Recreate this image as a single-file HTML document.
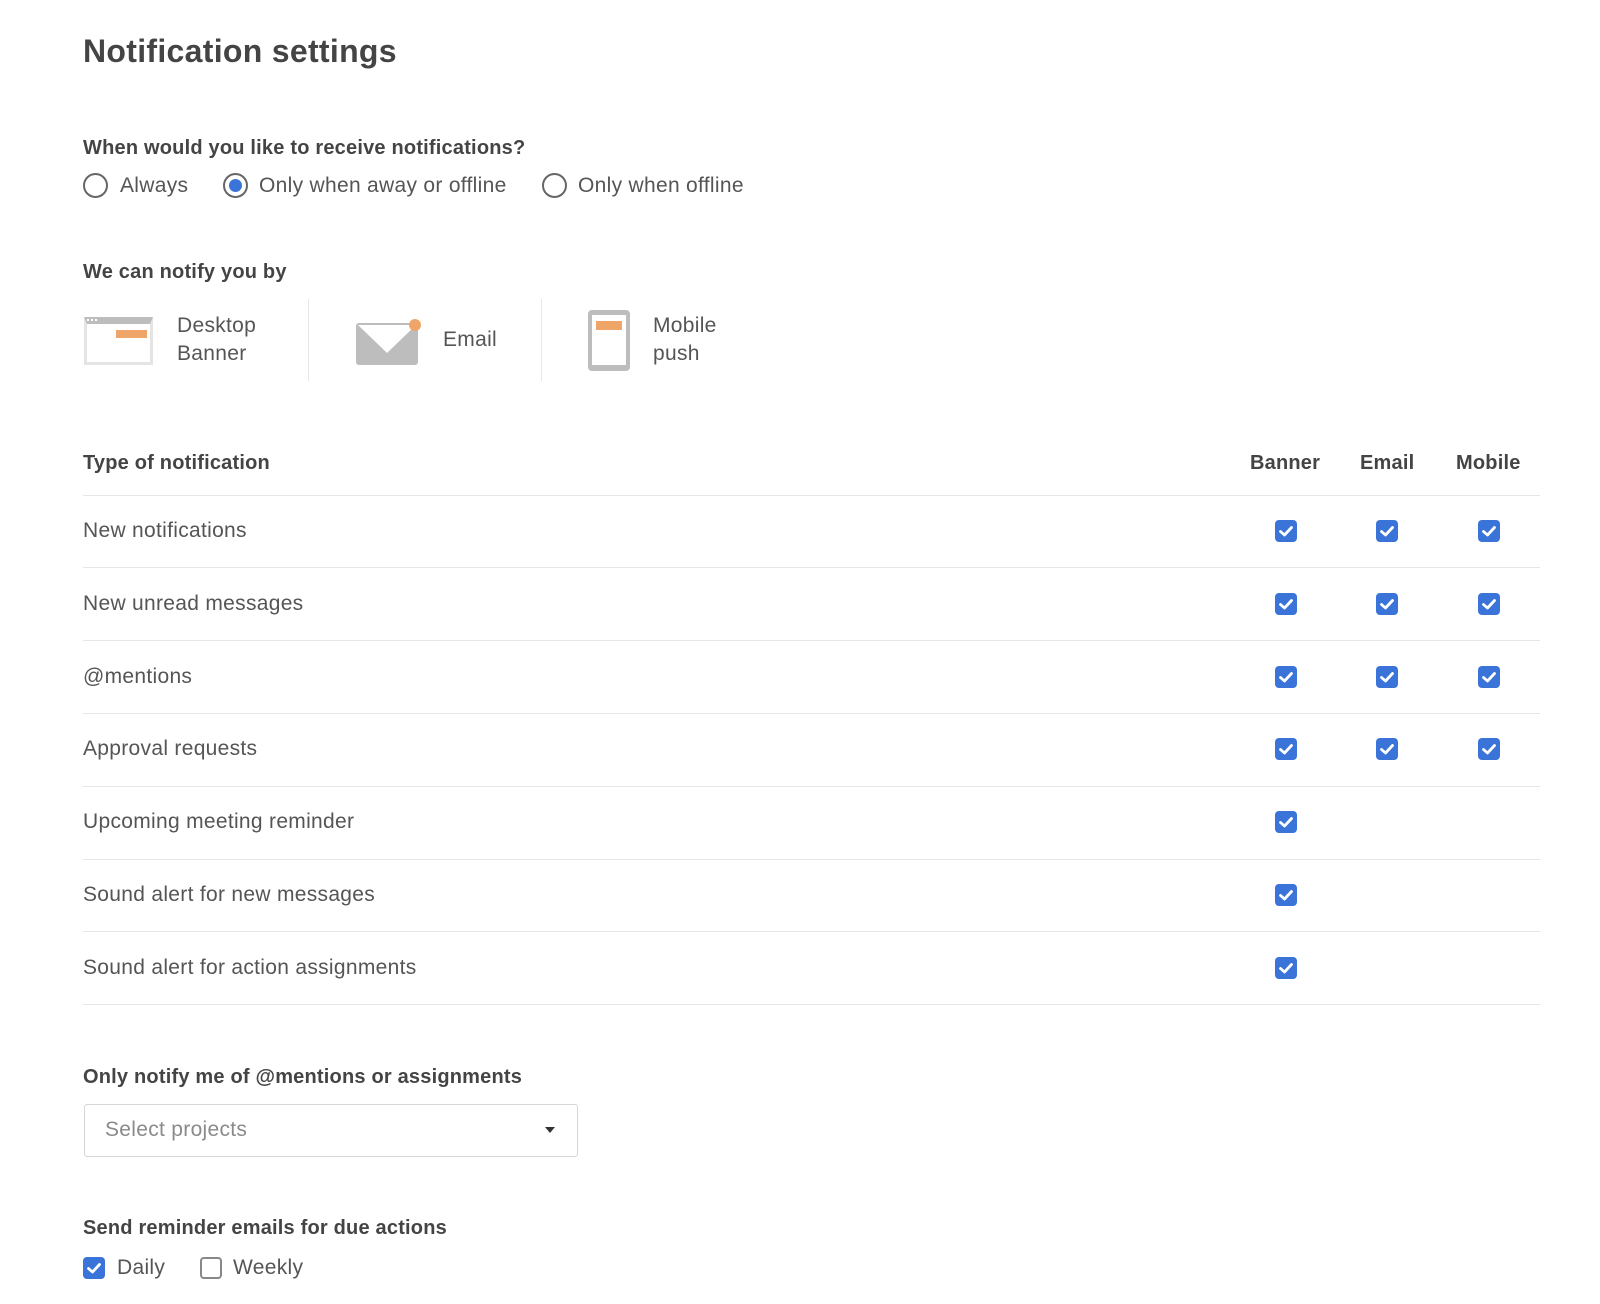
<!DOCTYPE html>
<html><head><meta charset="utf-8"><style>
*{margin:0;padding:0;box-sizing:border-box}
body{width:1600px;height:1304px;background:#fff;font-family:"Liberation Sans",sans-serif;color:#555;position:relative;overflow:hidden}
.a{position:absolute;white-space:nowrap;line-height:30px;font-size:21px;letter-spacing:0.3px}
.h{font-weight:bold;color:#444;font-size:20px;letter-spacing:0.2px}
.radio{position:absolute;width:25px;height:25px;border:2px solid #666;border-radius:50%}
.radio.on::after{content:"";position:absolute;left:4px;top:4px;width:13px;height:13px;border-radius:50%;background:#3a74d8}
.cb{position:absolute;width:22px;height:22px;border-radius:4px;background:#3a74d8}
.cb svg{position:absolute;left:0;top:0}
.cbo{position:absolute;width:22px;height:22px;border-radius:4px;border:2px solid #888;background:#fff}
.line{position:absolute;left:83px;width:1457px;height:1px;background:#e6e6e6}
.vline{position:absolute;width:1px;background:#e6e6e6}
</style></head><body>
<div class="a" style="left:83px;top:31px;font-size:32px;line-height:40px;font-weight:bold;color:#444;letter-spacing:0.3px">Notification settings</div>

<div class="a h" style="left:83px;top:133px">When would you like to receive notifications?</div>
<div class="radio" style="left:83px;top:173px"></div>
<div class="a" style="left:120px;top:171px">Always</div>
<div class="radio on" style="left:223px;top:173px"></div>
<div class="a" style="left:259px;top:171px">Only when away or offline</div>
<div class="radio" style="left:542px;top:173px"></div>
<div class="a" style="left:578px;top:171px">Only when offline</div>

<div class="a h" style="left:83px;top:257px">We can notify you by</div>
<div style="position:absolute;left:84px;top:317px;width:69px;height:48px;border:3px solid #e4e4e4;border-top:7px solid #bdbdbd;background:#fff"></div>
<div style="position:absolute;left:87px;top:319px;width:2px;height:2px;background:#fff;box-shadow:4px 0 #fff,8px 0 #fff"></div>
<div style="position:absolute;left:116px;top:330px;width:31px;height:8px;background:#efa567"></div>
<div class="a" style="left:177px;top:311px">Desktop</div>
<div class="a" style="left:177px;top:339px">Banner</div>
<div class="vline" style="left:308px;top:299px;height:82px"></div>
<svg style="position:absolute;left:354px;top:315px" width="72" height="52" viewBox="0 0 72 52">
<rect x="2" y="8" width="62" height="42" rx="3" fill="#bdbdbd"/>
<path d="M4 10 L33 38 L62 10 Z" fill="#fff"/>
<circle cx="61" cy="10" r="6" fill="#efa567"/>
</svg>
<div class="a" style="left:443px;top:325px">Email</div>
<div class="vline" style="left:541px;top:299px;height:82px"></div>
<div style="position:absolute;left:588px;top:310px;width:42px;height:61px;border:4px solid #bdbdbd;border-top-width:5px;border-bottom-width:6px;border-radius:4px;background:#fff"></div>
<div style="position:absolute;left:596px;top:321px;width:26px;height:9px;background:#efa567"></div>
<div class="a" style="left:653px;top:311px">Mobile</div>
<div class="a" style="left:653px;top:339px">push</div>

<div class="a h" style="left:83px;top:448px">Type of notification</div>
<div class="a h" style="left:1250px;top:448px">Banner</div>
<div class="a h" style="left:1360px;top:448px">Email</div>
<div class="a h" style="left:1456px;top:448px">Mobile</div>
<div class="line" style="top:495px"></div>

<div id="rows"></div>

<div class="a h" style="left:83px;top:1062px">Only notify me of @mentions or assignments</div>
<div style="position:absolute;left:84px;top:1104px;width:494px;height:53px;border:1px solid #d6d6d6;border-radius:3px"></div>
<div class="a" style="left:105px;top:1115px;color:#8a8a8a">Select projects</div>
<div style="position:absolute;left:545px;top:1127px;width:0;height:0;border-left:5px solid transparent;border-right:5px solid transparent;border-top:6px solid #333"></div>

<div class="a h" style="left:83px;top:1213px">Send reminder emails for due actions</div>
<div class="cb" style="left:83px;top:1257px"><svg width="22" height="22" viewBox="0 0 22 22"><path d="M5.5 11.5 L9.5 15 L16.5 7.5" fill="none" stroke="#fff" stroke-width="2.8" stroke-linecap="round" stroke-linejoin="round"/></svg></div>
<div class="a" style="left:117px;top:1253px">Daily</div>
<div class="cbo" style="left:200px;top:1257px"></div>
<div class="a" style="left:233px;top:1253px">Weekly</div>

<script>
var rows=[["New notifications",3],["New unread messages",3],["@mentions",3],["Approval requests",3],["Upcoming meeting reminder",1],["Sound alert for new messages",1],["Sound alert for action assignments",1]];
var cols=[1286,1387,1489],h="";
rows.forEach(function(r,i){var c=531+i*72.8;
h+='<div class="a" style="left:83px;top:'+(c-15)+'px">'+r[0]+'</div>';
for(var k=0;k<r[1];k++)h+='<div class="cb" style="left:'+(cols[k]-11)+'px;top:'+(c-11)+'px"><svg width="22" height="22" viewBox="0 0 22 22"><path d="M5.5 11.5 L9.5 15 L16.5 7.5" fill="none" stroke="#fff" stroke-width="2.8" stroke-linecap="round" stroke-linejoin="round"/></svg></div>';
h+='<div class="line" style="top:'+Math.round(c+36.4)+'px"></div>';});
document.getElementById("rows").innerHTML=h;
</script>
</body></html>
